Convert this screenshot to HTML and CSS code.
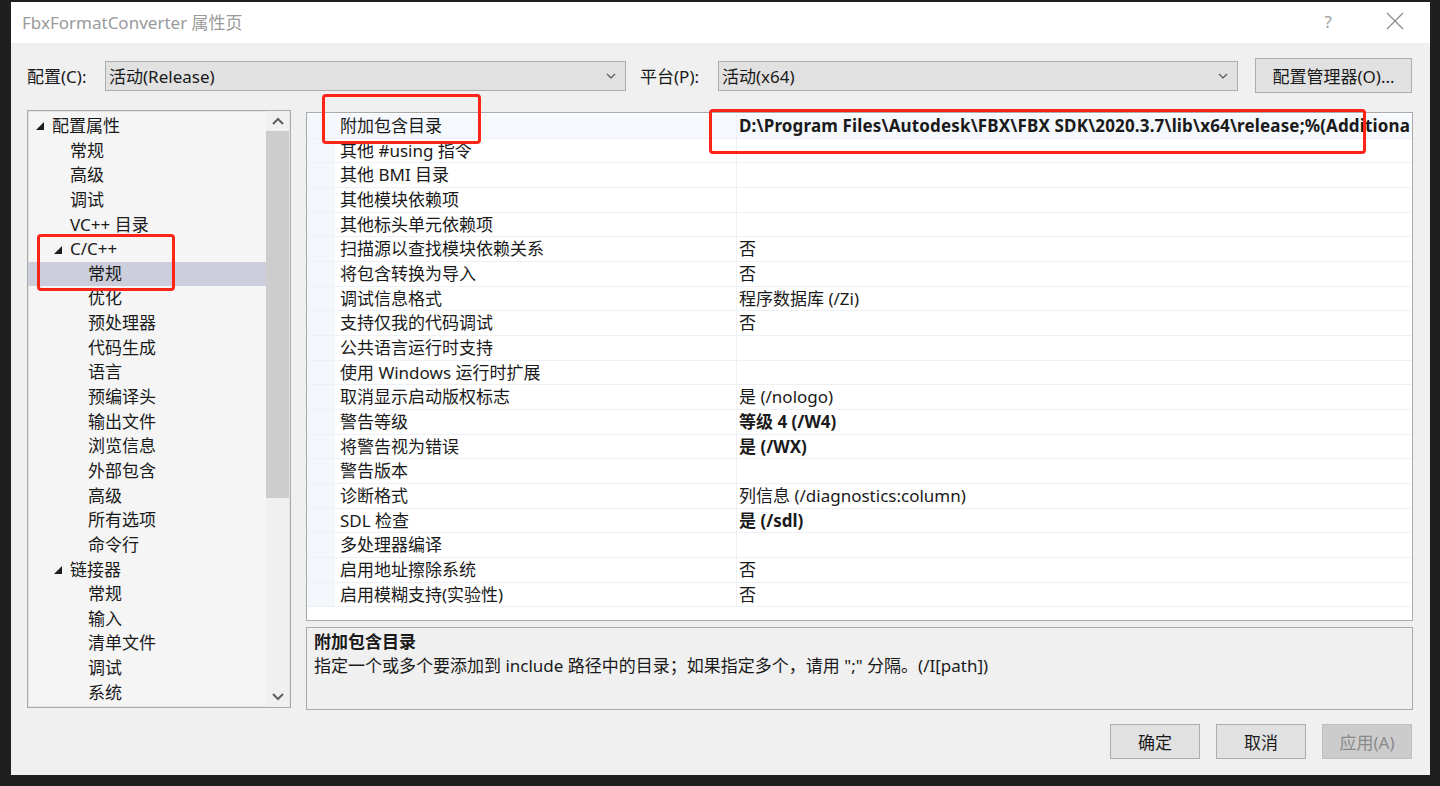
FILE: index.html
```html
<!doctype html>
<html>
	<head>
		<meta charset="UTF-8">
		<link rel="stylesheet" href="styles.css">
	</head>
	<body>
		<div class="dialog">
			<!-- Title bar -->
			<div class="titlebar">
				<span class="title">FbxFormatConverter 属性页</span>
				<span class="help">?</span>
				<svg class="close" width="18" height="18" viewBox="0 0 18 18"><path d="M1 1 L17 17 M17 1 L1 17" stroke="#8a8a8a" stroke-width="1.2" fill="none"/></svg>
			</div>

			<!-- Configuration / platform -->
			<div class="configrow">
				<span class="label">配置(C):</span>
				<div class="select sel-config">
					<span>活动(Release)</span>
					<svg width="10" height="6" viewBox="0 0 10 6"><path d="M1 1 L5 5 L9 1" stroke="#555" stroke-width="1.2" fill="none"/></svg>
				</div>
				<span class="label label2">平台(P):</span>
				<div class="select sel-platform">
					<span>活动(x64)</span>
					<svg width="10" height="6" viewBox="0 0 10 6"><path d="M1 1 L5 5 L9 1" stroke="#555" stroke-width="1.2" fill="none"/></svg>
				</div>
				<div class="button manager">配置管理器(O)...</div>
			</div>

			<div class="main">
				<!-- Tree -->
				<div class="tree">
					<div class="treeitems">
						<div class="node l0"><svg class="tri" width="8" height="8" viewBox="0 0 8 8"><polygon points="8,0 8,8 0,8" fill="#1e1e1e"/></svg>配置属性</div>
						<div class="node l1">常规</div>
						<div class="node l1">高级</div>
						<div class="node l1">调试</div>
						<div class="node l1">VC++ 目录</div>
						<div class="node l1"><svg class="tri" width="8" height="8" viewBox="0 0 8 8"><polygon points="8,0 8,8 0,8" fill="#1e1e1e"/></svg>C/C++</div>
						<div class="node l2 selected">常规</div>
						<div class="node l2">优化</div>
						<div class="node l2">预处理器</div>
						<div class="node l2">代码生成</div>
						<div class="node l2">语言</div>
						<div class="node l2">预编译头</div>
						<div class="node l2">输出文件</div>
						<div class="node l2">浏览信息</div>
						<div class="node l2">外部包含</div>
						<div class="node l2">高级</div>
						<div class="node l2">所有选项</div>
						<div class="node l2">命令行</div>
						<div class="node l1"><svg class="tri" width="8" height="8" viewBox="0 0 8 8"><polygon points="8,0 8,8 0,8" fill="#1e1e1e"/></svg>链接器</div>
						<div class="node l2">常规</div>
						<div class="node l2">输入</div>
						<div class="node l2">清单文件</div>
						<div class="node l2">调试</div>
						<div class="node l2">系统</div>
					</div>
					<div class="scrollbar">
						<div class="arrow"><svg width="12" height="8" viewBox="0 0 12 8"><path d="M1 7 L6 2 L11 7" stroke="#606060" stroke-width="2" fill="none"/></svg></div>
						<div class="thumb"></div>
						<div class="track"></div>
						<div class="arrow"><svg width="12" height="8" viewBox="0 0 12 8"><path d="M1 1 L6 6 L11 1" stroke="#606060" stroke-width="2" fill="none"/></svg></div>
					</div>
				</div>

				<div class="right">
					<!-- Property grid -->
					<div class="grid">
						<div class="row first"><span class="margin"></span><span class="name">附加包含目录</span><span class="value bold path">D:\Program Files\Autodesk\FBX\FBX SDK\2020.3.7\lib\x64\release;%(Additiona</span></div>
						<div class="row"><span class="margin"></span><span class="name">其他 #using 指令</span><span class="value"></span></div>
						<div class="row"><span class="margin"></span><span class="name">其他 BMI 目录</span><span class="value"></span></div>
						<div class="row"><span class="margin"></span><span class="name">其他模块依赖项</span><span class="value"></span></div>
						<div class="row"><span class="margin"></span><span class="name">其他标头单元依赖项</span><span class="value"></span></div>
						<div class="row"><span class="margin"></span><span class="name">扫描源以查找模块依赖关系</span><span class="value">否</span></div>
						<div class="row"><span class="margin"></span><span class="name">将包含转换为导入</span><span class="value">否</span></div>
						<div class="row"><span class="margin"></span><span class="name">调试信息格式</span><span class="value">程序数据库 (/Zi)</span></div>
						<div class="row"><span class="margin"></span><span class="name">支持仅我的代码调试</span><span class="value">否</span></div>
						<div class="row"><span class="margin"></span><span class="name">公共语言运行时支持</span><span class="value"></span></div>
						<div class="row"><span class="margin"></span><span class="name">使用 Windows 运行时扩展</span><span class="value"></span></div>
						<div class="row"><span class="margin"></span><span class="name">取消显示启动版权标志</span><span class="value">是 (/nologo)</span></div>
						<div class="row"><span class="margin"></span><span class="name">警告等级</span><span class="value bold">等级 4 (/W4)</span></div>
						<div class="row"><span class="margin"></span><span class="name">将警告视为错误</span><span class="value bold">是 (/WX)</span></div>
						<div class="row"><span class="margin"></span><span class="name">警告版本</span><span class="value"></span></div>
						<div class="row"><span class="margin"></span><span class="name">诊断格式</span><span class="value">列信息 (/diagnostics:column)</span></div>
						<div class="row"><span class="margin"></span><span class="name">SDL 检查</span><span class="value bold">是 (/sdl)</span></div>
						<div class="row"><span class="margin"></span><span class="name">多处理器编译</span><span class="value"></span></div>
						<div class="row"><span class="margin"></span><span class="name">启用地址擦除系统</span><span class="value">否</span></div>
						<div class="row"><span class="margin"></span><span class="name">启用模糊支持(实验性)</span><span class="value">否</span></div>
					</div>

					<!-- Description -->
					<div class="desc">
						<div class="desc-title">附加包含目录</div>
						<div>指定一个或多个要添加到 include 路径中的目录；如果指定多个，请用 ";" 分隔。(/I[path])</div>
					</div>
				</div>
			</div>

			<div class="buttons">
				<div class="button">确定</div>
				<div class="button">取消</div>
				<div class="button disabled">应用(A)</div>
			</div>

			<!-- red annotation boxes -->
			<div class="mark mark-tree"></div>
			<div class="mark mark-name"></div>
			<div class="mark mark-value"></div>
		</div>
	</body>
</html>
```

FILE: styles.css
```css
body {
	margin: 0;
	background-color: #1f1f1f;
	font-family: "Noto Sans", "Noto Sans CJK SC", sans-serif;
	font-size: 17px;
	color: #1a1a1a;
}
.dialog {
	position: relative;
	margin-left: 11px;
	margin-top: 2px;
	width: 1419px;
	height: 773px;
	background-color: #f0f0f0;
}
.titlebar {
	box-sizing: border-box;
	height: 41px;
	background-color: #fff;
	display: flex;
	align-items: center;
	padding-left: 11px;
	padding-bottom: 3px;
}
.title {
	color: #9a9a9a;
	flex: 1;
	font-size: 17px;
}
.help {
	color: #a0a0a0;
	font-size: 17px;
	margin-right: 54px;
}
.close {
	margin-right: 26px;
}
.configrow {
	display: flex;
	align-items: center;
	height: 35px;
	margin-top: 15px;
	padding-left: 16px;
}
.label {
	width: 78px;
}
.label2 {
	margin-left: 14px;
}
.select {
	box-sizing: border-box;
	height: 30px;
	display: flex;
	align-items: center;
	justify-content: space-between;
	background-color: #e1e1e1;
	border: 1px solid #adadad;
	padding-left: 3px;
	padding-right: 9px;
}
.sel-config {
	width: 521px;
}
.sel-platform {
	width: 520px;
}
.button {
	box-sizing: border-box;
	height: 35px;
	display: flex;
	align-items: center;
	justify-content: center;
	background-color: #e1e1e1;
	border: 1px solid #adadad;
}
.manager {
	width: 157px;
	margin-left: 17px;
}
.main {
	display: flex;
	margin-top: 17px;
	padding-left: 16px;
}
.tree {
	box-sizing: border-box;
	width: 264px;
	height: 598px;
	border: 1px solid #a9a9a9;
	box-shadow: inset 0 0 0 1px #e3e3e3;
	background-color: #f5f5f5;
	display: flex;
	overflow: hidden;
}
.treeitems {
	flex: 1;
	padding-top: 3px;
}
.node {
	height: 24.65px;
	line-height: 24.65px;
	white-space: nowrap;
	display: flex;
	align-items: center;
}
.node.l0 {
	padding-left: 8px;
}
.node.l1 {
	padding-left: 42px;
}
.node.l2 {
	padding-left: 60px;
}
.node .tri {
	margin-right: 8px;
	margin-left: -16px;
}
.node.l0 .tri {
	margin-left: 0;
	margin-right: 8px;
}
.node.selected {
	background-color: #cccedb;
}
.scrollbar {
	width: 23px;
	margin-right: 1px;
	display: flex;
	flex-direction: column;
	background-color: #f0f0f0;
}
.scrollbar .arrow {
	height: 20px;
	display: flex;
	align-items: center;
	justify-content: center;
}
.scrollbar .thumb {
	height: 367px;
	background-color: #cdcdcd;
}
.scrollbar .track {
	flex: 1;
}
.right {
	margin-left: 15px;
	display: flex;
	flex-direction: column;
	margin-top: 2px;
}
.grid {
	box-sizing: border-box;
	width: 1107px;
	height: 509px;
	border: 1px solid #a9a9a9;
	padding-top: 1px;
	background-color: #fff;
	overflow: hidden;
}
.row {
	display: flex;
	height: 24.68px;
	line-height: 23.68px;
	border-bottom: 1px solid #eef0f3;
	box-sizing: border-box;
	white-space: nowrap;
}
.row.first {
	background-color: #f5f8fc;
}
.row .margin {
	width: 28px;
	flex: none;
	background-color: #f3f6fb;
}
.row .name {
	width: 396px;
	flex: none;
	padding-left: 5px;
	border-right: 1px solid #eef0f3;
}
.row .value {
	padding-left: 2px;
	overflow: hidden;
}
.row .path {
	letter-spacing: 0.15px;
}
.bold {
	font-weight: bold;
}
.desc {
	box-sizing: border-box;
	width: 1107px;
	height: 83px;
	margin-top: 6px;
	border: 1px solid #a9a9a9;
	padding: 2px 7px;
	line-height: 24px;
}
.desc-title {
	font-weight: bold;
}
.buttons {
	display: flex;
	justify-content: flex-end;
	gap: 16px;
	margin-top: 14px;
	padding-right: 18px;
}
.buttons .button {
	width: 90px;
}
.buttons .disabled {
	background-color: #cccccc;
	border-color: #bfbfbf;
	color: #8a8a8a;
}
.mark {
	position: absolute;
	border: 3px solid #ff2418;
	border-radius: 4px;
	box-sizing: border-box;
}
.mark-tree {
	left: 26px;
	top: 232px;
	width: 138px;
	height: 57px;
}
.mark-name {
	left: 311px;
	top: 92px;
	width: 159px;
	height: 50px;
}
.mark-value {
	left: 698px;
	top: 107px;
	width: 657px;
	height: 45px;
}
```
